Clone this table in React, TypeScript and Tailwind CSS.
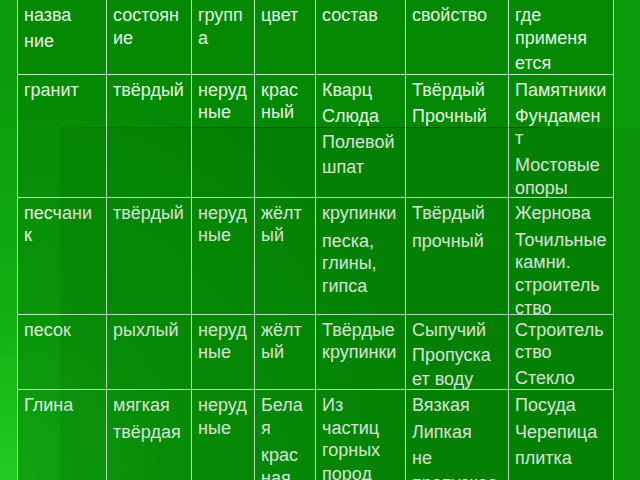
import React from "react";

type Line = [string, number];
type Cell = Line[];

const gapCls: Record<number, string> = {
  0: "",
  1: "mt-px",
  2: "mt-[2px]",
  3: "mt-[3px]",
  4: "mt-[4px]",
  5: "mt-[5px]",
  6: "mt-[6px]",
};

const rows: Cell[][] = [
  [
    [["назва", 0], ["ние", 4]],
    [["состоян", 0], ["ие", 1]],
    [["групп", 0], ["а", 1]],
    [["цвет", 0]],
    [["состав", 0]],
    [["свойство", 0]],
    [["где", 0], ["применя", 1], ["ется", 3]],
  ],
  [
    [["гранит", 0]],
    [["твёрдый", 0]],
    [["неруд", 0], ["ные", 0]],
    [["крас", 0], ["ный", 0]],
    [["Кварц", 0], ["Слюда", 4], ["Полевой", 4], ["шпат", 3]],
    [["Твёрдый", 0], ["Прочный", 4]],
    [["Памятники", 0], ["Фундамен", 4], ["т", 0], ["Мостовые", 5], ["опоры", 1]],
  ],
  [
    [["песчани", 0], ["к", 0]],
    [["твёрдый", 0]],
    [["неруд", 0], ["ные", 0]],
    [["жёлт", 0], ["ый", 0]],
    [["крупинки", 0], ["песка,", 6], ["глины,", 0], ["гипса", 1]],
    [["Твёрдый", 0], ["прочный", 6]],
    [["Жернова", 0], ["Точильные", 5], ["камни.", 0], ["строитель", 1], ["ство", 1]],
  ],
  [
    [["песок", 0]],
    [["рыхлый", 0]],
    [["неруд", 0], ["ные", 0]],
    [["жёлт", 0], ["ый", 0]],
    [["Твёрдые", 0], ["крупинки", 0]],
    [["Сыпучий", 0], ["Пропуска", 3], ["ет воду", 2]],
    [["Строитель", 0], ["ство", 0], ["Стекло", 4]],
  ],
  [
    [["Глина", 0]],
    [["мягкая", 0], ["твёрдая", 5]],
    [["неруд", 0], ["ные", 1]],
    [["Бела", 0], ["я", 1], ["крас", 5], ["ная", 1]],
    [["Из", 0], ["частиц", 1], ["горных", 0], ["пород", 2]],
    [["Вязкая", 0], ["Липкая", 5], ["не", 4], ["пропускае", 3]],
    [["Посуда", 0], ["Черепица", 5], ["плитка", 4]],
  ],
];

export default function App() {
  return (
    <div
      className="relative w-[640px] h-[480px] overflow-hidden bg-[radial-gradient(circle_at_0%_100%,#22cc22_0px,#12b012_160px,#0a9a0a_420px)]"
      style={{ fontFamily: '"Liberation Sans", Arial, sans-serif' }}
    >
      <div className="flex pl-[17px]">
        <div className="grid grid-cols-[90px_85px_63px_61px_90px_103px_105px] grid-rows-[75px_123px_117px_75px_120px] bg-[rgba(0,120,0,0.47)]">
          {rows.map((row, ri) =>
            row.map((cell, ci) => (
              <div
                key={`${ri}-${ci}`}
                className={
                  "border-r border-b border-[#c2eac2] pl-[6px] pt-[4px] text-[18px] leading-[22px] text-[#e2f4e2] " +
                  (ci === 0 ? "border-l" : "")
                }
              >
                {cell.map(([t, g], li) => (
                  <div key={li} className={"whitespace-nowrap " + gapCls[g]}>
                    {t}
                  </div>
                ))}
              </div>
            ))
          )}
        </div>
      </div>
      <div className="pointer-events-none absolute left-[60px] top-[128px] w-[580px] h-[352px] bg-[rgba(0,30,0,0.07)]" />
      <div className="pointer-events-none absolute left-[60px] top-[127px] w-[530px] h-px bg-[linear-gradient(to_right,rgba(0,0,0,0.06),rgba(0,0,0,0.35)_48%,rgba(0,0,0,0.35)_88%,transparent)]" />
    </div>
  );
}
